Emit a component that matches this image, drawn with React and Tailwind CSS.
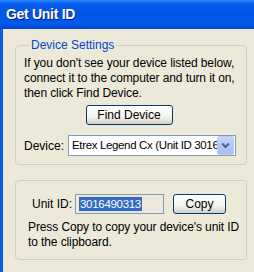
import React from "react";

export default function App() {
  const font = { fontFamily: '"Liberation Sans", Arial, sans-serif' };
  return (
    <div className="w-[254px] h-[272px] flex flex-col bg-[#ECE9D8] overflow-hidden" style={font}>
      <div className="h-[29px] shrink-0 flex items-center pl-[6px] bg-[linear-gradient(to_bottom,#2E8BFF_0%,#0A5FF0_12%,#0055E5_45%,#0058EE_80%,#0048CC_100%)]">
        <span className="text-white font-bold text-[14px] tracking-[-0.3px] [text-shadow:1px_1px_0_#0A1E7A]">Get Unit ID</span>
      </div>
      <div className="flex flex-1">
        <div className="w-[3px] bg-[linear-gradient(to_right,#0A5AE8,#0F62F0,#0050D8)]" />
        <div className="flex-1 flex flex-col pl-[12px] pr-[7px] pt-[9px] text-[12px] text-black">
          <fieldset className="border border-[#D0D0BF] rounded-[4px] h-[127px] pl-[8px] pr-[4px]">
            <legend className="ml-[5px] px-[2px] text-[#0046D5] text-[12px] leading-[14px]">Device Settings</legend>
            <p className="leading-[15px] mt-[4px] tracking-[-0.1px]">
              If you don't see your device listed below,<br />
              connect it to the computer and turn it on,<br />
              then click Find Device.
            </p>
            <div className="flex justify-center mt-[4px] pr-[8px]">
              <button className="w-[87px] h-[20px] border border-[#003C74] rounded-[3px] bg-[linear-gradient(to_bottom,#FFFFFF,#F3F3EE_60%,#D6D0C5)] text-[12px] leading-none">Find Device</button>
            </div>
            <div className="flex items-center mt-[10px]">
              <span className="w-[44px]">Device:</span>
              <div className="w-[168px] h-[21px] border border-[#7F9DB9] bg-white flex items-center">
                <span className="flex-1 pl-[3px] overflow-hidden whitespace-nowrap text-[11.5px] tracking-[-0.35px]">Etrex Legend Cx (Unit ID 3016</span>
                <div className="w-[17px] h-[19px] mr-[1px] rounded-[2px] bg-[linear-gradient(to_bottom,#C5D6FC,#B4C8F6_50%,#A9BFF4)] border border-[#B9CCF5] flex items-center justify-center">
                  <svg width="9" height="7" viewBox="0 0 9 7"><path d="M1 1.5 L4.5 5 L8 1.5" stroke="#4D6185" strokeWidth="2" fill="none" /></svg>
                </div>
              </div>
            </div>
          </fieldset>
          <div className="mt-[15px] border border-[#D0D0BF] rounded-[4px] h-[80px] flex flex-col pl-[12px]">
            <div className="flex items-center mt-[13px]">
              <span className="w-[47px] pl-[4px]">Unit ID:</span>
              <div className="w-[89px] h-[20px] border border-[#7F9DB9] bg-[#ECE9D8] flex items-center pl-[3px]">
                <span className="bg-[#316AC5] text-white px-[1px] leading-[14px] text-[11.5px] tracking-[-0.3px]">3016490313</span>
              </div>
              <button className="ml-[9px] w-[53px] h-[20px] border border-[#003C74] rounded-[3px] bg-[linear-gradient(to_bottom,#FFFFFF,#F3F3EE_60%,#D6D0C5)] text-[12px] leading-none">Copy</button>
            </div>
            <p className="leading-[15px] mt-[6px] tracking-[-0.1px]">
              Press Copy to copy your device's unit ID<br />
              to the clipboard.
            </p>
          </div>
        </div>
      </div>
    </div>
  );
}
